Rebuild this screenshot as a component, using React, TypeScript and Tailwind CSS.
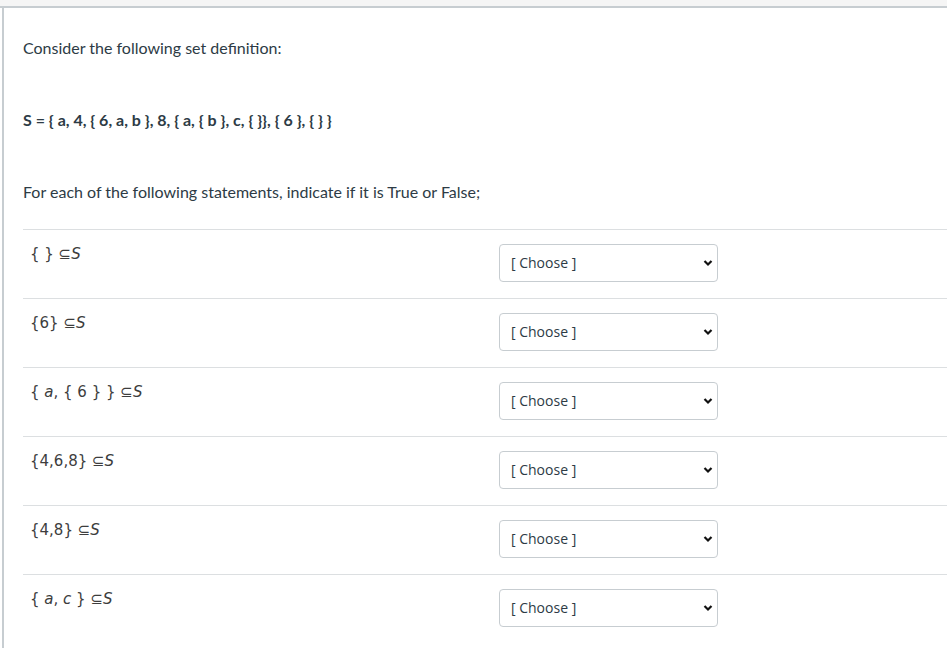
import React from 'react';

type Statement = {
  key: string;
  parts: Array<{ text: string; italic?: boolean }>;
};

const statements: Statement[] = [
  { key: 'empty', parts: [{ text: '{ } ⊆' }, { text: 'S', italic: true }] },
  { key: 'six', parts: [{ text: '{6} ⊆' }, { text: 'S', italic: true }] },
  {
    key: 'a-six',
    parts: [
      { text: '{ ' },
      { text: 'a', italic: true },
      { text: ', { 6 } } ⊆' },
      { text: 'S', italic: true },
    ],
  },
  { key: 'four-six-eight', parts: [{ text: '{4,6,8} ⊆' }, { text: 'S', italic: true }] },
  { key: 'four-eight', parts: [{ text: '{4,8} ⊆' }, { text: 'S', italic: true }] },
  {
    key: 'a-c',
    parts: [
      { text: '{ ' },
      { text: 'a', italic: true },
      { text: ', ' },
      { text: 'c', italic: true },
      { text: ' } ⊆' },
      { text: 'S', italic: true },
    ],
  },
];

function ChooseSelect() {
  return (
    <div className="relative w-[219px] h-[38px]">
      <select
        defaultValue=""
        className="w-full h-full appearance-none rounded-[4px] border border-[#c7cdd1] bg-white pl-[11px] pr-8 pb-[2px] text-[14px] text-[#2d3b45] font-['Open_Sans',sans-serif] outline-none"
      >
        <option value="">[ Choose ]</option>
        <option value="true">True</option>
        <option value="false">False</option>
      </select>
      <svg
        className="pointer-events-none absolute right-[5px] top-1/2 -translate-y-1/2"
        width="10"
        height="8"
        viewBox="0 0 10 8"
      >
        <path d="M1.5 2 L5 5.5 L8.5 2" fill="none" stroke="#111" strokeWidth="2.2" />
      </svg>
    </div>
  );
}

export default function App() {
  return (
    <div className="w-full h-[648px] overflow-hidden bg-white font-['Lato',sans-serif] text-[#2d3b45]">
      <div className="h-[8px] bg-[#f5f5f5] border-b-2 border-[#c7cdd1]" />
      <div className="ml-[2px] h-full border-l-2 border-[#c7cdd1] pl-[19px] pt-[28px]">
        <p className="text-[16px] leading-[24px]">Consider the following set definition:</p>
        <p className="mt-[48px] text-[16px] leading-[24px] font-bold">
          S = {'{'} a, 4, {'{'} 6, a, b {'}'}, 8, {'{'} a, {'{'} b {'}'}, c, {'{'} {'}'}{'}'}, {'{'} 6 {'}'}, {'{'} {'}'} {'}'}
        </p>
        <p className="mt-[48px] text-[16px] leading-[24px]">
          For each of the following statements, indicate if it is True or False;
        </p>

        <div className="mt-[25px]">
          {statements.map((s) => (
            <div key={s.key} className="flex h-[69px] border-t border-[#dcdfe1]">
              <div className="w-[476px] pl-[7px] pt-[14px] font-['DejaVu_Sans',sans-serif] text-[15px] leading-[20px] text-[#3d3d3d]">
                {s.parts.map((p, i) =>
                  p.italic ? (
                    <i key={i}>{p.text}</i>
                  ) : (
                    <span key={i}>{p.text}</span>
                  ),
                )}
              </div>
              <div className="pt-[14px]">
                <ChooseSelect />
              </div>
            </div>
          ))}
        </div>
      </div>
    </div>
  );
}
